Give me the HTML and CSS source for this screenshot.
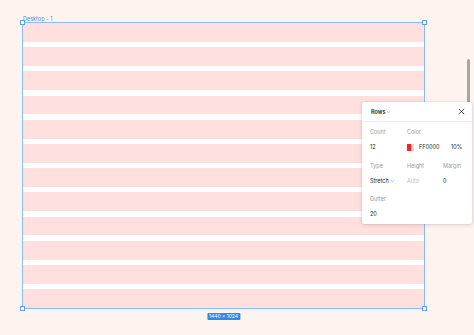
FILE: index.html
```html
<!DOCTYPE html>
<html>
<head>
<meta charset="utf-8">
<link rel="stylesheet" href="styles.css">
</head>
<body>
<div class="canvas">
  <div class="frame-label">Desktop - 1</div>
  <div class="frame">
    <div class="grid">
      <div class="row"></div><div class="row"></div><div class="row"></div><div class="row"></div>
      <div class="row"></div><div class="row"></div><div class="row"></div><div class="row"></div>
      <div class="row"></div><div class="row"></div><div class="row"></div><div class="row"></div>
    </div>
    <span class="handle tl"></span><span class="handle tr"></span>
    <span class="handle bl"></span><span class="handle br"></span>
    <div class="size-badge">1440 × 1024</div>
  </div>
  <div class="scrollbar"></div>
  <div class="panel">
    <div class="panel-head">
      <div class="title">Rows <svg class="chev" width="5" height="4" viewBox="0 0 5 4"><path d="M0.8 1.2 L2.5 2.8 L4.2 1.2" fill="none" stroke="#999" stroke-width="0.7"/></svg></div>
      <svg class="close" width="7" height="7" viewBox="0 0 7 7"><path d="M0.8 0.8 L6.2 6.2 M6.2 0.8 L0.8 6.2" stroke="#333" stroke-width="0.9"/></svg>
    </div>
    <div class="panel-body">
      <div class="fields two">
        <div class="lbl">Count</div><div class="lbl">Color</div>
        <div class="val">12</div>
        <div class="val color"><span class="swatch"></span><span class="hex">FF0000</span><span class="pct">10%</span></div>
      </div>
      <div class="fields three">
        <div class="lbl">Type</div><div class="lbl">Height</div><div class="lbl">Margin</div>
        <div class="val">Stretch <svg class="chev" width="5" height="4" viewBox="0 0 5 4"><path d="M0.8 1.2 L2.5 2.8 L4.2 1.2" fill="none" stroke="#999" stroke-width="0.7"/></svg></div>
        <div class="val muted">Auto</div>
        <div class="val">0</div>
      </div>
      <div class="fields one">
        <div class="lbl">Gutter</div>
        <div class="val">20</div>
      </div>
    </div>
  </div>
</div>
</body>
</html>
```
FILE: styles.css
```css
html, body {
  margin: 0;
  padding: 0;
}
body {
  width: 474px;
  height: 335px;
  overflow: hidden;
  background: #fdf4ef;
  font-family: Inter, "Noto Sans", sans-serif;
}
.canvas {
  position: relative;
  width: 474px;
  height: 335px;
}
.frame-label {
  position: absolute;
  left: 23px;
  top: 16px;
  font-size: 5.5px;
  color: #4a8ee0;
  line-height: 7px;
}
.frame {
  position: absolute;
  left: 22px;
  top: 22px;
  width: 401px;
  height: 285px;
  border: 1px solid #8dbbf0;
  background: #ffffff;
}
.grid {
  display: grid;
  grid-template-rows: repeat(12, 1fr);
  row-gap: 5.5px;
  height: 100%;
}
.row {
  background: #ffe0df;
}
.handle {
  position: absolute;
  width: 3px;
  height: 3px;
  background: #fff;
  border: 1px solid #5fa0ea;
}
.handle.tl { left: -3px; top: -3px; }
.handle.tr { right: -3px; top: -3px; }
.handle.bl { left: -3px; bottom: -3px; }
.handle.br { right: -3px; bottom: -3px; }
.size-badge {
  position: absolute;
  left: 50%;
  bottom: -12px;
  transform: translateX(-50%);
  background: #2f8be6;
  color: #fff;
  font-size: 5px;
  line-height: 7px;
  padding: 0 2px;
  border-radius: 1px;
  white-space: nowrap;
}
.scrollbar {
  position: absolute;
  left: 467px;
  top: 59px;
  width: 3px;
  height: 60px;
  border-radius: 2px;
  background: #a9a5a4;
}
.panel {
  position: absolute;
  left: 362px;
  top: 102px;
  width: 110px;
  height: 122px;
  background: #fff;
  border-radius: 2px;
  box-shadow: 0 1px 4px rgba(0,0,0,0.15), 0 0 0 0.5px rgba(0,0,0,0.06);
  font-size: 5.5px;
  color: #222;
}
.panel-head {
  display: flex;
  align-items: center;
  justify-content: space-between;
  height: 19px;
  padding: 0 7px 0 9px;
  border-bottom: 1px solid #ececec;
}
.title {
  font-weight: 600;
  display: flex;
  align-items: center;
  gap: 1px;
}
.panel-body {
  padding: 7px 8px 0 8px;
  display: flex;
  flex-direction: column;
  gap: 11.5px;
}
.fields {
  display: grid;
  row-gap: 8px;
  align-items: center;
}
.fields.two { grid-template-columns: 37px 1fr; }
.fields.three { grid-template-columns: 37px 36px 1fr; }
.fields.one { grid-template-columns: 1fr; }
.lbl {
  color: #9a9a9a;
  line-height: 7px;
}
.val {
  line-height: 7px;
  display: flex;
  align-items: center;
  gap: 1px;
}
.val.muted { color: #bdbdbd; }
.color { gap: 0; }
.swatch {
  width: 7px;
  height: 7px;
  margin-right: 5px;
  background: linear-gradient(to right, #ff2020 50%, #ffd0d0 50%);
}
.hex { width: 32px; }
```
